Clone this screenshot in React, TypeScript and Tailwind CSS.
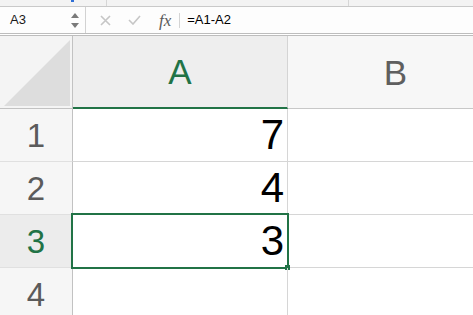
import React from "react";

const GREEN = "#217346";

function Spinner() {
  return (
    <svg width="8" height="15" viewBox="0 0 8 15">
      <path d="M4 0 L8 5 L0 5 Z" fill="#7a7a7a" />
      <path d="M4 15 L8 10 L0 10 Z" fill="#7a7a7a" />
    </svg>
  );
}

function FormulaBar() {
  return (
    <div className="flex h-[26px] items-center bg-[#fdfdfd]">
      <div className="flex h-full w-[86px] items-center justify-between border-r border-[#d2d2d2] pl-[10px] pr-[6px]">
        <span className="text-[13px] text-[#1a1a1a]">A3</span>
        <Spinner />
      </div>
      {/* cancel */}
      <svg className="ml-[14px]" width="11" height="11" viewBox="0 0 11 11">
        <path d="M1 1 L10 10 M10 1 L1 10" stroke="#c6c6c6" strokeWidth="1.6" fill="none" />
      </svg>
      {/* enter */}
      <svg className="ml-[17px]" width="13" height="10" viewBox="0 0 13 10">
        <path d="M1 5 L5 9 L12 1" stroke="#c6c6c6" strokeWidth="1.6" fill="none" />
      </svg>
      <span className="ml-[18px] font-['Liberation_Serif',serif] text-[17px] italic leading-none text-[#5a5a5a]">
        fx
      </span>
      <div className="ml-[8px] h-[15px] w-px bg-[#d4d4d4]" />
      <span className="ml-[7px] text-[13px] text-black">=A1-A2</span>
    </div>
  );
}

function Corner() {
  return (
    <div className="h-full w-[73px] border-b border-r border-[#c2c2c2] bg-[#f4f4f4]">
      <svg width="72" height="72" viewBox="0 0 72 72">
        <path d="M70 4 L70 70 L4 70 Z" fill="#dddddd" />
      </svg>
    </div>
  );
}

const rows = [
  { n: "1", a: "7" },
  { n: "2", a: "4" },
  { n: "3", a: "3", selected: true },
  { n: "4", a: "" },
];

export default function App() {
  return (
    <div className="h-[315px] w-[473px] overflow-hidden bg-white font-['Liberation_Sans',Arial,sans-serif]">
      {/* ribbon remnant */}
      <div className="flex h-[7px] border-b border-[#c9c9c9] bg-[#f3f3f3]">
        <div className="w-[71px]" />
        <div className="h-[2px] w-[3px] bg-[#2f6fd6]" />
        <div className="w-[32px]" />
        <div className="h-full w-px bg-[#d6d6d6]" />
        <div className="w-[241px]" />
        <div className="h-full w-px bg-[#d6d6d6]" />
      </div>

      <FormulaBar />

      <div className="h-[3px] border-b border-t border-[#bdbdbd] bg-white" />

      {/* column headers */}
      <div className="flex h-[73px]">
        <Corner />
        <div className="flex h-full w-[215px] shrink-0 items-center justify-center border-b-2 border-r border-b-[#217346] border-r-[#d4d4d4] bg-[#eeeeee]">
          <span className="text-[35px] leading-none" style={{ color: GREEN }}>
            A
          </span>
        </div>
        <div className="flex h-full w-[215px] shrink-0 items-center justify-center border-b border-[#c8c8c8] bg-[#f7f7f7]">
          <span className="text-[35px] leading-none text-[#5f5f5f]">B</span>
        </div>
      </div>

      {rows.map((r) => (
        <div key={r.n} className="flex h-[53px]">
          <div
            className={`flex h-full w-[73px] shrink-0 items-center justify-center border-b border-r border-b-[#e0e0e0] border-r-[#c2c2c2] ${
              r.selected ? "bg-[#ececec]" : "bg-[#f6f6f6]"
            }`}
          >
            <span
              className={`text-[33px] leading-none ${r.selected ? "text-[#217346]" : "text-[#5b5b5b]"}`}
            >
              {r.n}
            </span>
          </div>
          <div className="relative flex h-full w-[215px] shrink-0 items-center justify-end border-b border-r border-[#d6d6d6] pr-[3px]">
            <span className="text-[42px] leading-none text-black">{r.a}</span>
            {r.selected && (
              <>
                <div className="absolute left-[-2px] top-[-2px] h-[56px] w-[218px] border-2 border-[#217346]" />
                <div className="absolute left-[212px] top-[50px] h-[5px] w-[5px] bg-[#217346]" />
              </>
            )}
          </div>
          <div className="h-full w-[215px] shrink-0 border-b border-[#d6d6d6]" />
        </div>
      ))}
    </div>
  );
}
